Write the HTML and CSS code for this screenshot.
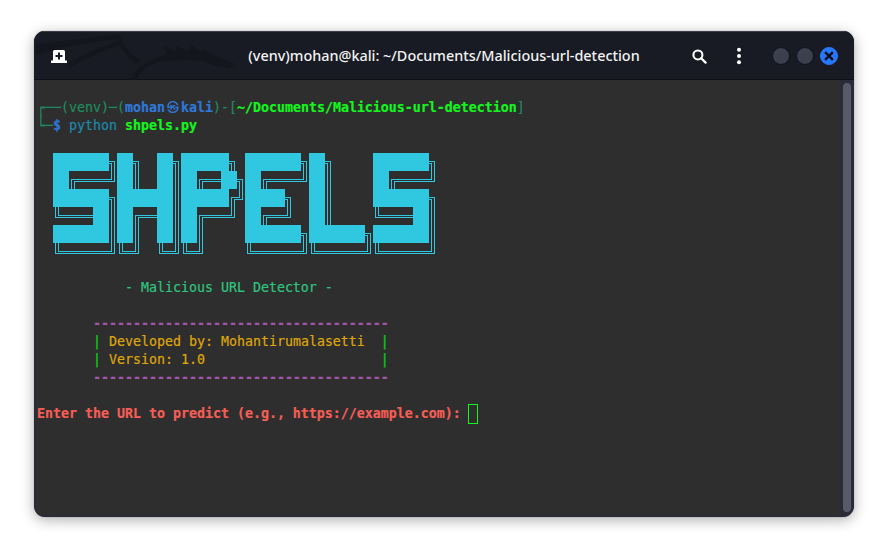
FILE: index.html
```html
<!DOCTYPE html>
<html lang="en">
<head>
<meta charset="utf-8">
<title>(venv)mohan@kali: ~/Documents/Malicious-url-detection</title>
<link rel="stylesheet" href="styles.css">
</head>
<body>
<main class="window">
  <header class="titlebar">
    <svg class="dragon" viewBox="0 0 220 48" aria-hidden="true">
      <path d="M2 13 C30 8 60 5 82 3 L85 7 C55 10 25 16 2 23Z"/>
      <path d="M33 32 C50 22 68 14 84 9 L86 13 C68 19 50 27 35 36Z"/>
      <path d="M80 2 L86 2 C89 14 97 23 107 29 L103 32 C93 26 85 14 80 2Z"/>
      <path d="M96 49 C99 39 109 31 125 25 L133 22 L129 13 L141 20 L143 13 L153 20 L158 13 L167 20 L170 17 L177 22 L186 26 L201 32 L195 36 L187 35 L178 33 L170 29 C155 27 140 28 124 30 C112 33 105 41 102 49Z"/>
    </svg>
    <button class="tool newtab" aria-label="New tab">
      <svg width="16" height="13" viewBox="0 0 16 13"><path fill="#fff" fill-rule="evenodd" d="M3.500 0h9A1.500 1.500 0 0 1 14 1.500V10.500h2V13H0v-2.500h2V1.500A1.500 1.500 0 0 1 3.500 0zM7 2.500V5H4.500v2H7v2.500h2V7h2.500V5H9V2.500z"/></svg>
    </button>
    <h1 class="title">(venv)mohan@kali: ~/Documents/Malicious-url-detection</h1>
    <div class="actions">
      <button class="tool search" aria-label="Search">
        <svg width="15" height="15" viewBox="0 0 16 16"><circle cx="6.300" cy="6.300" r="4.800" fill="none" stroke="#fff" stroke-width="2.200"/><path d="M9.800 9.800 14.500 14.500" stroke="#fff" stroke-width="2.400" stroke-linecap="round"/></svg>
      </button>
      <button class="tool menu" aria-label="Menu">
        <svg width="6" height="18" viewBox="0 0 6 18"><circle cx="3" cy="2.700" r="2" fill="#fff"/><circle cx="3" cy="9" r="2" fill="#fff"/><circle cx="3" cy="15.300" r="2" fill="#fff"/></svg>
      </button>
      <div class="controls">
        <span class="dot"></span>
        <span class="dot"></span>
        <span class="dot close">
          <svg width="10" height="10" viewBox="0 0 9 9"><path d="M1 1 8 8M8 1 1 8" stroke="#0c0f18" stroke-width="2.200"/></svg>
        </span>
      </div>
    </div>
  </header>
  <div class="body">
    <section class="terminal">
<pre class="line"><span class="green-dim"><span class="tall">┌</span>──(venv)─(</span><b class="blue">mohan<span class="at">㉿</span>kali</b><span class="green-dim">)-[</span><b class="lime">~/Documents/Malicious-url-detection</b><span class="green-dim">]</span></pre>
<pre class="line"><span class="green-dim"><span class="tall">└</span>─</span><b class="blue">$</b> <span class="teal">python</span> <b class="lime">shpels.py</b></pre>
<pre class="line"> </pre>
<div class="art">
<div class="row"><i class="b b7">███████</i><i class="tr">╗</i><i class="b b2">██</i><i class="tr">╗</i><i class="sp"></i><i class="sp"></i><i class="b b2">██</i><i class="tr">╗</i><i class="b b6">██████</i><i class="tr">╗</i><i class="sp"></i><i class="b b7">███████</i><i class="tr">╗</i><i class="b b2">██</i><i class="tr">╗</i><i class="sp5"></i><i class="b b7">███████</i><i class="tr">╗</i></div>
<div class="row"><i class="b b2">██</i><i class="tl">╔</i><i class="h">═</i><i class="h">═</i><i class="h">═</i><i class="h">═</i><i class="br">╝</i><i class="b b2">██</i><i class="v">║</i><i class="sp"></i><i class="sp"></i><i class="b b2">██</i><i class="v">║</i><i class="b b2">██</i><i class="tl">╔</i><i class="h">═</i><i class="h">═</i><i class="b b2">██</i><i class="tr">╗</i><i class="b b2">██</i><i class="tl">╔</i><i class="h">═</i><i class="h">═</i><i class="h">═</i><i class="h">═</i><i class="br">╝</i><i class="b b2">██</i><i class="v">║</i><i class="sp5"></i><i class="b b2">██</i><i class="tl">╔</i><i class="h">═</i><i class="h">═</i><i class="h">═</i><i class="h">═</i><i class="br">╝</i></div>
<div class="row"><i class="b b7">███████</i><i class="tr">╗</i><i class="b b7">███████</i><i class="v">║</i><i class="b b6">██████</i><i class="tl">╔</i><i class="br">╝</i><i class="b b5">█████</i><i class="tr">╗</i><i class="sp"></i><i class="sp"></i><i class="b b2">██</i><i class="v">║</i><i class="sp5"></i><i class="b b7">███████</i><i class="tr">╗</i></div>
<div class="row"><i class="bl">╚</i><i class="h">═</i><i class="h">═</i><i class="h">═</i><i class="h">═</i><i class="b b2">██</i><i class="v">║</i><i class="b b2">██</i><i class="tl">╔</i><i class="h">═</i><i class="h">═</i><i class="b b2">██</i><i class="v">║</i><i class="b b2">██</i><i class="tl">╔</i><i class="h">═</i><i class="h">═</i><i class="h">═</i><i class="br">╝</i><i class="sp"></i><i class="b b2">██</i><i class="tl">╔</i><i class="h">═</i><i class="h">═</i><i class="br">╝</i><i class="sp"></i><i class="sp"></i><i class="b b2">██</i><i class="v">║</i><i class="sp5"></i><i class="bl">╚</i><i class="h">═</i><i class="h">═</i><i class="h">═</i><i class="h">═</i><i class="b b2">██</i><i class="v">║</i></div>
<div class="row"><i class="b b7">███████</i><i class="v">║</i><i class="b b2">██</i><i class="v">║</i><i class="sp"></i><i class="sp"></i><i class="b b2">██</i><i class="v">║</i><i class="b b2">██</i><i class="v">║</i><i class="sp5"></i><i class="b b7">███████</i><i class="tr">╗</i><i class="b b7">███████</i><i class="tr">╗</i><i class="b b7">███████</i><i class="v">║</i></div>
<div class="row"><i class="bl">╚</i><i class="h">═</i><i class="h">═</i><i class="h">═</i><i class="h">═</i><i class="h">═</i><i class="h">═</i><i class="br">╝</i><i class="bl">╚</i><i class="h">═</i><i class="br">╝</i><i class="sp"></i><i class="sp"></i><i class="bl">╚</i><i class="h">═</i><i class="br">╝</i><i class="bl">╚</i><i class="h">═</i><i class="br">╝</i><i class="sp5"></i><i class="bl">╚</i><i class="h">═</i><i class="h">═</i><i class="h">═</i><i class="h">═</i><i class="h">═</i><i class="h">═</i><i class="br">╝</i><i class="bl">╚</i><i class="h">═</i><i class="h">═</i><i class="h">═</i><i class="h">═</i><i class="h">═</i><i class="h">═</i><i class="br">╝</i><i class="bl">╚</i><i class="h">═</i><i class="h">═</i><i class="h">═</i><i class="h">═</i><i class="h">═</i><i class="h">═</i><i class="br">╝</i></div>
</div>
<pre class="line"> </pre>
<pre class="line mint">           - Malicious URL Detector -</pre>
<pre class="line"> </pre>
<pre class="line purple">       -------------------------------------</pre>
<pre class="line">       <b class="pipe">|</b> <span class="amber">Developed by: Mohantirumalasetti</span>  <b class="pipe">|</b></pre>
<pre class="line">       <b class="pipe">|</b> <span class="amber">Version: 1.0</span>                      <b class="pipe">|</b></pre>
<pre class="line purple">       -------------------------------------</pre>
<pre class="line"> </pre>
<pre class="line"><b class="red">Enter the URL to predict (e.g., https://example.com):</b> <span class="cursor"></span></pre>
    </section>
    <aside class="scrollbar"><div class="thumb"></div></aside>
  </div>
</main>
</body>
</html>
```
FILE: styles.css
```css
* { box-sizing: border-box; }
html, body { height: 100%; }
body {
  margin: 0;
  background: #fff;
  padding: 31px 34px 37px;
}
.window {
  height: 486px;
  display: flex;
  flex-direction: column;
  border-radius: 11px;
  overflow: hidden;
  background: #292b36;
  box-shadow: 0 3px 14px rgba(0,0,0,.32), 0 0 1px rgba(0,0,0,.5);
}
.titlebar {
  position: relative;
  height: 49px;
  flex: none;
  display: flex;
  align-items: center;
  background: #181b24;
  border-top: 1px solid #3a3d48;
  border-bottom: 1px solid #0f1117;
  padding: 1px 16px 0 17px;
}
.dragon {
  position: absolute;
  left: 0;
  top: 0;
  width: 220px;
  height: 48px;
  fill: #14161e;
}
.tool {
  position: relative;
  padding: 0;
  border: 0;
  background: none;
  display: flex;
  align-items: center;
  justify-content: center;
}
.title {
  position: absolute;
  left: 0;
  right: 0;
  top: 14px;
  margin: 0;
  text-align: center;
  color: #f2f2f2;
  font: 500 14.400px/20px "Noto Sans", sans-serif;
}
.actions {
  position: relative;
  margin-left: auto;
  display: flex;
  align-items: center;
}
.search { margin-right: 29px; }
.menu { margin-right: 30px; }
.controls { display: flex; gap: 6px; }
.dot {
  width: 18px;
  height: 18px;
  border-radius: 50%;
  background: #3c3f4e;
  border: 1px solid #0f1117;
  display: flex;
  align-items: center;
  justify-content: center;
}
.close { background: #2777ff; border-color: #2777ff; }
.body {
  flex: 1;
  min-height: 0;
  display: flex;
  padding: 0 0 2px 2px;
}
.terminal {
  flex: 1;
  background: #2e2e2e;
  padding: 19px 0 0 1px;
  font: 13.290px/18px "DejaVu Sans Mono", "Liberation Mono", monospace;
  color: #ddd;
  -webkit-text-stroke: 0.2px;
}
.line {
  margin: 0;
  height: 18px;
  font: inherit;
  white-space: pre;
}

/* The banner sits on an exact 8x18 cell grid; box glyphs are painted per cell,
   the way a terminal emulator paints them itself. */
.art {
  --c: #30c8e0;
  height: 108px;
  padding-left: 16px;
}
.row {
  display: flex;
  height: 18px;
}
.row i {
  flex: none;
  display: block;
  width: 8px;
  height: 18px;
  overflow: hidden;
  font-style: normal;
  color: transparent;
  -webkit-text-stroke: 0;
  background-repeat: no-repeat;
}
.row .b {
  background: var(--c);
}
.row .b2 { width: 16px; }
.row .b5 { width: 40px; }
.row .b6 { width: 48px; }
.row .b7 { width: 56px; }
.row .sp5 { width: 40px; }
.row .h {
  background-image: linear-gradient(var(--c), var(--c)), linear-gradient(var(--c), var(--c));
  background-size: 8px 1px, 8px 1px;
  background-position: 0 8px, 0 10px;
}
.row .v {
  background-image: linear-gradient(var(--c), var(--c)), linear-gradient(var(--c), var(--c));
  background-size: 1px 18px, 1px 18px;
  background-position: 2px 0, 5px 0;
}
.row .tr, .row .tl, .row .br, .row .bl {
  background-image: linear-gradient(var(--c), var(--c)), linear-gradient(var(--c), var(--c)), linear-gradient(var(--c), var(--c)), linear-gradient(var(--c), var(--c));
}
/* ╗ */
.row .tr {
  background-size: 6px 1px, 1px 10px, 3px 1px, 1px 8px;
  background-position: 0 8px, 5px 8px, 0 10px, 2px 10px;
}
/* ╔ */
.row .tl {
  background-size: 6px 1px, 1px 10px, 3px 1px, 1px 8px;
  background-position: 2px 8px, 2px 8px, 5px 10px, 5px 10px;
}
/* ╝ */
.row .br {
  background-size: 6px 1px, 1px 11px, 3px 1px, 1px 9px;
  background-position: 0 10px, 5px 0, 0 8px, 2px 0;
}
/* ╚ */
.row .bl {
  background-size: 6px 1px, 1px 11px, 3px 1px, 1px 9px;
  background-position: 2px 10px, 2px 0, 5px 8px, 5px 0;
}

.tall {
  display: inline-block;
  transform: scaleY(1.200);
}
.at {
  display: inline-block;
  width: 16px;
  text-align: center;
  font: 700 12px/1 "Noto Sans CJK KR", sans-serif;
}
b { font-weight: 700; }
.green-dim { color: #1f8a60; }
.blue { color: #2f78d8; }
.lime { color: #14f51e; }
.teal { color: #1e88a8; }
.mint { color: #2fc47e; }
.purple { color: #a056a6; font-weight: 700; }
.amber { color: #dfa50c; }
.pipe { color: #0fbc14; }
.red { color: #f55e56; }
.cursor {
  display: inline-block;
  width: 10px;
  height: 20px;
  margin-left: -1px;
  border: 1px solid #14f51e;
  vertical-align: top;
  margin-top: -1px;
}
.scrollbar {
  width: 14px;
  flex: none;
  padding: 3px;
}
.thumb {
  height: 100%;
  border-radius: 4px;
  background: #565a69;
}
```
